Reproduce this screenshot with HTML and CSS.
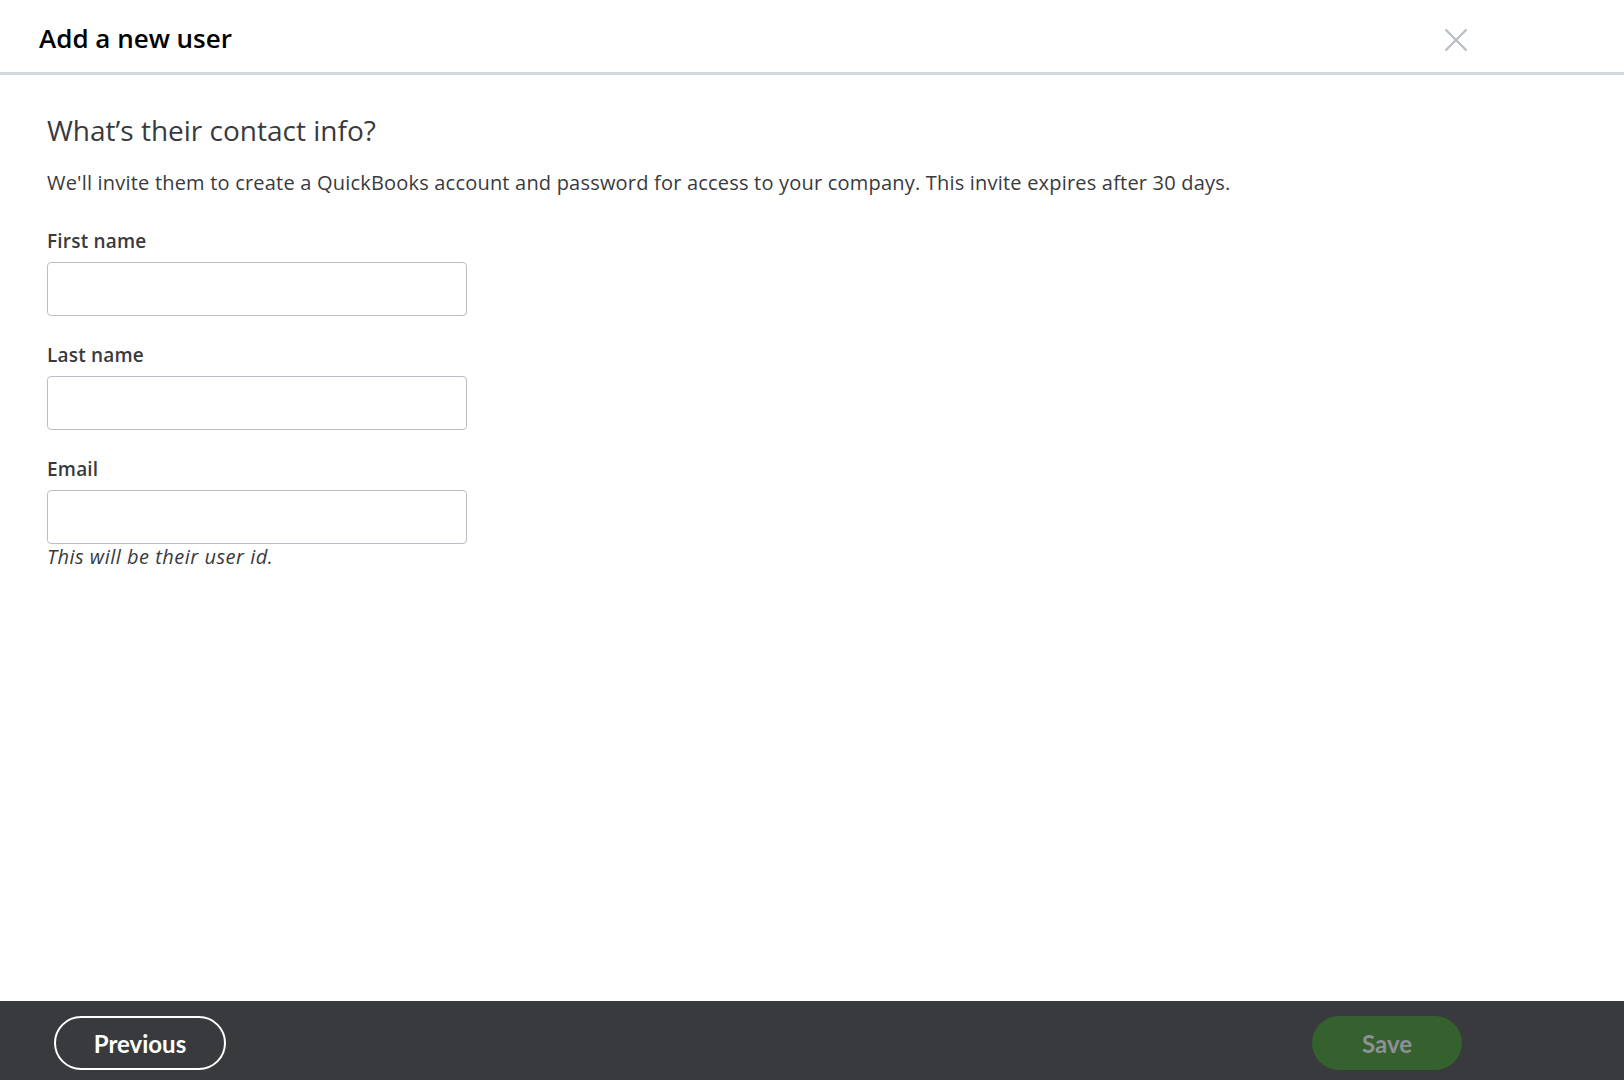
FILE: index.html
```html
<!DOCTYPE html>
<html lang="en">
<head>
  <meta charset="UTF-8">
  <title>Add a new user</title>
  <link rel="stylesheet" href="styles.css">
</head>
<body>
  <div class="page">
    <header class="header">
      <h1>Add a new user</h1>
      <button class="close" aria-label="Close">
        <svg width="24" height="24" viewBox="0 0 24 24">
          <path d="M1.5 1.5 L22.5 22.5 M22.5 1.5 L1.5 22.5" stroke="#babec5" stroke-width="2.4" fill="none"/>
        </svg>
      </button>
    </header>

    <main class="content">
      <h2>What&rsquo;s their contact info?</h2>
      <p class="intro">We'll invite them to create a QuickBooks account and password for access to your company. This invite expires after 30 days.</p>

      <div class="form-group">
        <label for="firstName">First name</label>
        <input type="text" id="firstName">
      </div>
      <div class="form-group">
        <label for="lastName">Last name</label>
        <input type="text" id="lastName">
      </div>
      <div class="form-group">
        <label for="email">Email</label>
        <input type="email" id="email">
        <p class="hint">This will be their user id.</p>
      </div>
    </main>

    <footer class="footer">
      <button class="btn btn-outline">Previous</button>
      <button class="btn btn-save">Save</button>
    </footer>
  </div>
</body>
</html>
```

FILE: styles.css
```css
/* General */
body {
  margin: 0;
  font-family: 'Open Sans', Lato, sans-serif;
  color: #393a3d;
  background: #fff;
}

.page {
  display: flex;
  flex-direction: column;
  height: 100vh;
}

/* Header */
.header {
  height: 68px;
  display: flex;
  align-items: center;
  justify-content: space-between;
  padding: 4px 156px 0 39px;
  border-bottom: 3px solid #d4d7dc;
}

.header h1 {
  margin: 0;
  font-size: 26px;
  font-weight: 600;
  color: #000;
}

.close {
  border: none;
  background: none;
  padding: 0;
  margin-top: 3px;
  width: 24px;
  height: 24px;
  cursor: pointer;
}

/* Content */
.content {
  flex: 1;
  padding: 37px 47px 0;
}

.content h2 {
  margin: 0 0 23px;
  font-size: 28px;
  font-weight: 400;
  line-height: 36px;
}

.intro {
  margin: 0 0 34px;
  font-size: 20px;
  letter-spacing: 0.2px;
  line-height: 24px;
}

.form-group {
  margin-bottom: 27px;
}

.form-group label {
  display: block;
  margin-bottom: 9px;
  font-size: 19px;
  font-weight: 600;
  letter-spacing: 0.2px;
  line-height: 24px;
}

.form-group input {
  display: block;
  box-sizing: border-box;
  width: 420px;
  height: 54px;
  border: 1px solid #babec5;
  border-radius: 4px;
  font-size: 19px;
  padding: 0 12px;
}

.hint {
  margin: 1px 0 0;
  font-size: 20px;
  font-style: italic;
  letter-spacing: 0.5px;
  line-height: 24px;
}

/* Footer */
.footer {
  height: 79px;
  box-sizing: border-box;
  background: #393a3d;
  display: flex;
  justify-content: space-between;
  align-items: flex-start;
  padding: 15px 162px 0 54px;
}

.btn {
  height: 54px;
  border-radius: 27px;
  font-family: Lato, 'Open Sans', sans-serif;
  font-size: 24px;
  font-weight: 700;
  cursor: pointer;
}

.btn-outline {
  width: 172px;
  background: transparent;
  border: 2px solid #fff;
  color: #fff;
}

.btn-save {
  width: 150px;
  background: #35612f;
  border: none;
  color: #8d9096;
}
```
